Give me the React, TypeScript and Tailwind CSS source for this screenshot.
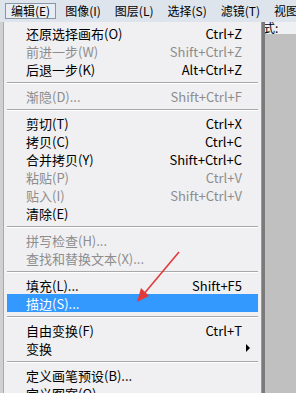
import React from 'react';

type Item =
  | { sep: true }
  | { label: string; key?: string; off?: boolean; active?: boolean; sub?: boolean };

const items: Item[] = [
  { label: '还原选择画布(O)', key: 'Ctrl+Z' },
  { label: '前进一步(W)', key: 'Shift+Ctrl+Z', off: true },
  { label: '后退一步(K)', key: 'Alt+Ctrl+Z' },
  { sep: true },
  { label: '渐隐(D)...', key: 'Shift+Ctrl+F', off: true },
  { sep: true },
  { label: '剪切(T)', key: 'Ctrl+X' },
  { label: '拷贝(C)', key: 'Ctrl+C' },
  { label: '合并拷贝(Y)', key: 'Shift+Ctrl+C' },
  { label: '粘贴(P)', key: 'Ctrl+V', off: true },
  { label: '贴入(I)', key: 'Shift+Ctrl+V', off: true },
  { label: '清除(E)' },
  { sep: true },
  { label: '拼写检查(H)...', off: true },
  { label: '查找和替换文本(X)...', off: true },
  { sep: true },
  { label: '填充(L)...', key: 'Shift+F5' },
  { label: '描边(S)...', active: true },
  { sep: true },
  { label: '自由变换(F)', key: 'Ctrl+T' },
  { label: '变换', sub: true },
  { sep: true },
  { label: '定义画笔预设(B)...' },
  { label: '定义图案(Q)...' },
];

const menus = ['编辑(E)', '图像(I)', '图层(L)', '选择(S)', '滤镜(T)', '视图'];

export default function App() {
  return (
    <div
      className="relative w-[296px] h-[393px] overflow-hidden bg-[#c0c0c0] text-[13px] leading-none"
      style={{ fontFamily: '"Noto Sans CJK SC", "Noto Sans", sans-serif' }}
    >
      {/* menu bar */}
      <div className="flex h-[22px] items-center bg-[#dde4ec] pl-[5px] whitespace-nowrap text-[12px]">
        {menus.map((m, i) => (
          <div
            key={m}
            className={
              i === 0
                ? 'h-[16px] px-[5px] flex items-center border border-[#8a96a8] bg-[#e8edf3] mr-[3px]'
                : 'h-[16px] px-[6px] flex items-center mr-[2px]'
            }
          >
            {m}
          </div>
        ))}
      </div>

      {/* workspace behind the menu */}
      <div className="flex h-[371px]">
        <div className="w-[3px] bg-[#d0d0d0]" />
        <div className="flex-1" />
        <div className="w-[34px] flex flex-col">
          <div className="h-[12px] bg-[#eef0f3] pl-[1px] text-[12px] leading-[12px]">式:</div>
          <div className="flex-1 bg-[#c0c0c0]" />
        </div>
      </div>

      {/* dropdown */}
      <div className="absolute left-[3px] top-[22px] w-[262px] h-[380px] flex">
        <div className="w-[259px] bg-[#f0f0f2] border-l border-[#a9a9a9] border-r border-r-[#9a9a9a] pt-[2px] pl-[3px] pr-[3px]">
          {items.map((it, i) =>
            'sep' in it ? (
              <div key={i} className="h-[9px] pt-[4px]">
                <div className="h-px bg-[#a8a8a8]" />
                <div className="h-px bg-white" />
              </div>
            ) : (
              <div
                key={i}
                className={
                  'h-[18px] flex items-center pl-[19px] pr-[16px] ' +
                  (it.active ? 'bg-[#3399ff] text-white' : it.off ? 'text-[#8d8d8d]' : 'text-black')
                }
              >
                <span className="flex-1">{it.label}</span>
                {it.key && <span>{it.key}</span>}
                {it.sub && (
                  <span className="mr-[-8px] w-0 h-0 border-y-[4px] border-y-transparent border-l-[4px] border-l-black" />
                )}
              </div>
            )
          )}
        </div>
        <div className="w-[3px] bg-[#7a7a7a]" />
      </div>

      {/* red arrow annotation */}
      <svg className="absolute left-0 top-0" width="296" height="393">
        <line x1="179" y1="252" x2="143" y2="295" stroke="#e23a3a" strokeWidth="1.6" />
        <polygon points="137,302 141,288 149,296" fill="#e23a3a" />
      </svg>
    </div>
  );
}
